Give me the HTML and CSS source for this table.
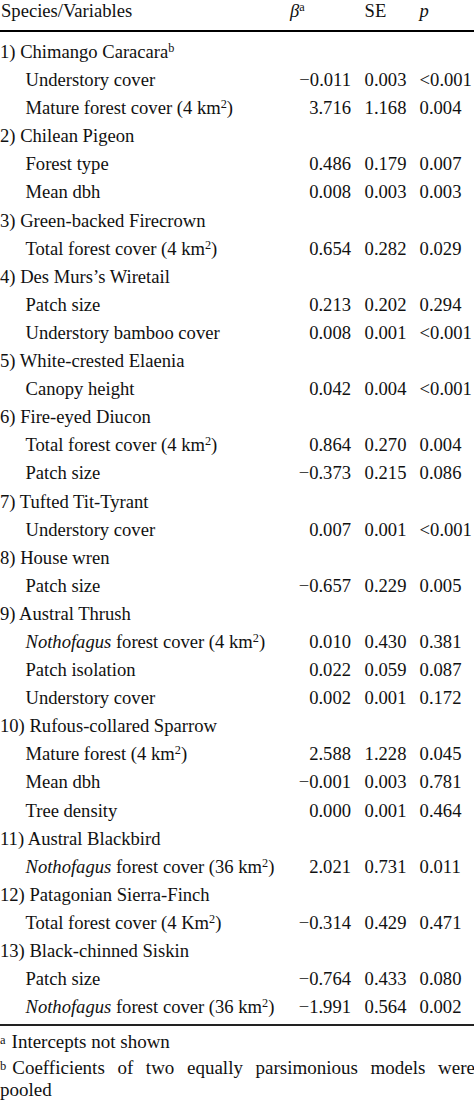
FILE: index.html
```html
<!DOCTYPE html>
<html>
<head>
<meta charset="utf-8">
<link rel="stylesheet" href="styles.css">
</head>
<body>
<div class="page">
  <div class="row head">
    <span class="lab">Species/Variables</span>
    <span class="b hb"><i>β</i><sup>a</sup></span>
    <span class="se">SE</span>
    <span class="p"><i>p</i></span>
  </div>
  <div class="tbody">
    <div class="row sp"><span class="lab">1) Chimango Caracara<sup>b</sup></span></div>
    <div class="row"><span class="lab">Understory cover</span><span class="b">−0.011</span><span class="se">0.003</span><span class="p">&lt;0.001</span></div>
    <div class="row"><span class="lab">Mature forest cover (4 km<sup>2</sup>)</span><span class="b">3.716</span><span class="se">1.168</span><span class="p">0.004</span></div>
    <div class="row sp"><span class="lab">2) Chilean Pigeon</span></div>
    <div class="row"><span class="lab">Forest type</span><span class="b">0.486</span><span class="se">0.179</span><span class="p">0.007</span></div>
    <div class="row"><span class="lab">Mean dbh</span><span class="b">0.008</span><span class="se">0.003</span><span class="p">0.003</span></div>
    <div class="row sp"><span class="lab">3) Green-backed Firecrown</span></div>
    <div class="row"><span class="lab">Total forest cover (4 km<sup>2</sup>)</span><span class="b">0.654</span><span class="se">0.282</span><span class="p">0.029</span></div>
    <div class="row sp"><span class="lab">4) Des Murs’s Wiretail</span></div>
    <div class="row"><span class="lab">Patch size</span><span class="b">0.213</span><span class="se">0.202</span><span class="p">0.294</span></div>
    <div class="row"><span class="lab">Understory bamboo cover</span><span class="b">0.008</span><span class="se">0.001</span><span class="p">&lt;0.001</span></div>
    <div class="row sp"><span class="lab">5) White-crested Elaenia</span></div>
    <div class="row"><span class="lab">Canopy height</span><span class="b">0.042</span><span class="se">0.004</span><span class="p">&lt;0.001</span></div>
    <div class="row sp"><span class="lab">6) Fire-eyed Diucon</span></div>
    <div class="row"><span class="lab">Total forest cover (4 km<sup>2</sup>)</span><span class="b">0.864</span><span class="se">0.270</span><span class="p">0.004</span></div>
    <div class="row"><span class="lab">Patch size</span><span class="b">−0.373</span><span class="se">0.215</span><span class="p">0.086</span></div>
    <div class="row sp"><span class="lab">7) Tufted Tit-Tyrant</span></div>
    <div class="row"><span class="lab">Understory cover</span><span class="b">0.007</span><span class="se">0.001</span><span class="p">&lt;0.001</span></div>
    <div class="row sp"><span class="lab">8) House wren</span></div>
    <div class="row"><span class="lab">Patch size</span><span class="b">−0.657</span><span class="se">0.229</span><span class="p">0.005</span></div>
    <div class="row sp"><span class="lab">9) Austral Thrush</span></div>
    <div class="row"><span class="lab"><i>Nothofagus</i> forest cover (4 km<sup>2</sup>)</span><span class="b">0.010</span><span class="se">0.430</span><span class="p">0.381</span></div>
    <div class="row"><span class="lab">Patch isolation</span><span class="b">0.022</span><span class="se">0.059</span><span class="p">0.087</span></div>
    <div class="row"><span class="lab">Understory cover</span><span class="b">0.002</span><span class="se">0.001</span><span class="p">0.172</span></div>
    <div class="row sp"><span class="lab">10) Rufous-collared Sparrow</span></div>
    <div class="row"><span class="lab">Mature forest (4 km<sup>2</sup>)</span><span class="b">2.588</span><span class="se">1.228</span><span class="p">0.045</span></div>
    <div class="row"><span class="lab">Mean dbh</span><span class="b">−0.001</span><span class="se">0.003</span><span class="p">0.781</span></div>
    <div class="row"><span class="lab">Tree density</span><span class="b">0.000</span><span class="se">0.001</span><span class="p">0.464</span></div>
    <div class="row sp"><span class="lab">11) Austral Blackbird</span></div>
    <div class="row"><span class="lab"><i>Nothofagus</i> forest cover (36 km<sup>2</sup>)</span><span class="b">2.021</span><span class="se">0.731</span><span class="p">0.011</span></div>
    <div class="row sp"><span class="lab">12) Patagonian Sierra-Finch</span></div>
    <div class="row"><span class="lab">Total forest cover (4 Km<sup>2</sup>)</span><span class="b">−0.314</span><span class="se">0.429</span><span class="p">0.471</span></div>
    <div class="row sp"><span class="lab">13) Black-chinned Siskin</span></div>
    <div class="row"><span class="lab">Patch size</span><span class="b">−0.764</span><span class="se">0.433</span><span class="p">0.080</span></div>
    <div class="row"><span class="lab"><i>Nothofagus</i> forest cover (36 km<sup>2</sup>)</span><span class="b">−1.991</span><span class="se">0.564</span><span class="p">0.002</span></div>
  </div>
  <div class="notes">
    <p class="note"><sup>a</sup>Intercepts not shown</p>
    <p class="note just"><sup>b</sup><span>Coefficients of two equally parsimonious models were</span> <span>pooled</span></p>
  </div>
</div>
</body>
</html>
```
FILE: styles.css
```css
html, body {
  margin: 0;
  padding: 0;
  background: #fff;
  overflow: hidden;
}
body {
  width: 474px;
  height: 1104px;
  font-family: "Liberation Serif", "Times New Roman", serif;
  font-size: 18.6px;
  color: #111;
}
.page {
  width: 480px;
}
.row {
  display: flex;
  align-items: baseline;
  height: 28.1px;
  line-height: 28.1px;
  white-space: nowrap;
}
.lab {
  width: 290px;
  padding-left: 25.5px;
  box-sizing: border-box;
}
.row.sp .lab {
  padding-left: 0;
}
.b {
  width: 61px;
  text-align: right;
}
.se {
  width: 55px;
  margin-left: 13.6px;
}
.p {
  width: 60px;
}
.head {
  height: 22px;
  line-height: 22px;
  padding-bottom: 8px;
  border-bottom: 2px solid #000;
}
.head .lab {
  padding-left: 1px;
}
.head .hb {
  text-align: left;
}
.tbody {
  padding-top: 6px;
  border-bottom: 2px solid #222;
  padding-bottom: 3px;
}
sup {
  font-size: 0.66em;
  line-height: 0;
  vertical-align: 0.5em;
}
.notes {
  padding-top: 5px;
  width: 475px;
}
.note {
  margin: 0;
  font-size: 19px;
  line-height: 22px;
}
.note + .note {
  margin-top: 4px;
}
.note sup {
  margin-right: 6px;
  vertical-align: 0.35em;
}
.just {
  text-align: justify;
  text-align-last: left;
}
```
